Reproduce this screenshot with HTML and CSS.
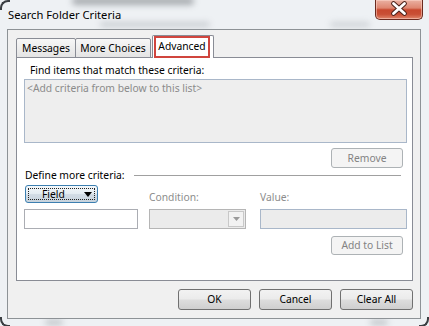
FILE: index.html
```html
<!DOCTYPE html>
<html>
<head>
<meta charset="utf-8">
<link rel="stylesheet" href="styles.css">
</head>
<body>
<div class="window">
  <div class="blur b1"></div>
  <div class="blur b2"></div>
  <div class="blur b3"></div>
  <div class="blur b4"></div>
  <div class="blur b5"></div>
  <div class="corner c-tl"></div>
  <div class="corner c-bl"></div>
  <div class="corner c-br"></div>
  <div class="titlebar">
    <span class="title">Search Folder Criteria</span>
    <div class="close">
      <svg width="48" height="20" viewBox="0 0 48 20">
        <path d="M18.5 4.5 L29.5 14.5 M29.5 4.5 L18.5 14.5" stroke="#4a2018" stroke-width="4.8" stroke-linecap="round" fill="none"/>
        <path d="M18.5 4.5 L29.5 14.5 M29.5 4.5 L18.5 14.5" stroke="#ffffff" stroke-width="2.8" stroke-linecap="round" fill="none"/>
      </svg>
    </div>
  </div>
  <div class="client">
    <div class="tabstrip">
      <div class="tab tab-messages">Messages</div>
      <div class="tab tab-more">More Choices</div>
      <div class="tab selected"><span class="mark">Advanced</span></div>
    </div>
    <div class="panel">
      <div class="find">Find items that match these criteria:</div>
      <div class="listbox">&lt;Add criteria from below to this list&gt;</div>
      <div class="btn disabled remove">Remove</div>
      <div class="sep"><span>Define more criteria:</span><i></i></div>
      <div class="criteria">
        <div class="field-btn"><span class="focus"></span><span class="field-text">Field</span>
          <svg class="field-arrow" width="8" height="5" viewBox="0 0 8 5"><path d="M0 0 H8 L4 5 Z" fill="#000"/></svg>
        </div>
        <div class="dim">Condition:</div>
        <div class="dim">Value:</div>
        <div class="input"></div>
        <div class="combo"><span class="drop"><svg width="7" height="4" viewBox="0 0 7 4"><path d="M0 0 H7 L3.5 4 Z" fill="#9a9a9a"/></svg></span></div>
        <div class="value"></div>
      </div>
      <div class="btn disabled add">Add to List</div>
    </div>
    <div class="footer">
      <div class="btn">OK</div>
      <div class="btn">Cancel</div>
      <div class="btn">Clear All</div>
    </div>
  </div>
</div>
</body>
</html>
```
FILE: styles.css
```css
* { box-sizing: border-box; }
body {
  margin: 0;
  font-family: "Noto Sans", "Open Sans", sans-serif;
  font-size: 10.3px;
  color: #000;
}
.window {
  position: relative;
  width: 429px;
  height: 326px;
  background: #eef1f4;
  overflow: hidden;
}
.blur {
  position: absolute;
  filter: blur(3px);
  border-radius: 4px;
}
.b1 { left: 72px; top: -3px; width: 122px; height: 8px; background: #6e7378; opacity: .55; }
.b2 { left: 100px; top: 22px; width: 110px; height: 5px; background: #9aa0a6; opacity: .45; }
.b3 { left: 330px; top: 22px; width: 40px; height: 5px; background: #9aa0a6; opacity: .4; }
.b4 { left: 45px; top: 320px; width: 18px; height: 5px; background: #8a8f94; opacity: .5; }
.b5 { left: 370px; top: 320px; width: 18px; height: 5px; background: #8a8f94; opacity: .5; }
.corner {
  position: absolute;
  width: 10px;
  height: 10px;
  border: 2px solid #3a3e42;
}
.c-tl { left: 0; top: 0; border-right: none; border-bottom: none; border-radius: 8px 0 0 0; }
.c-bl { left: 0; top: 317px; border-right: none; border-top: none; border-radius: 0 0 0 8px; }
.c-br { left: 419px; top: 317px; border-left: none; border-top: none; border-radius: 0 0 8px 0; }

.titlebar {
  position: relative;
  height: 29px;
  display: flex;
  align-items: flex-start;
}
.title {
  font-size: 11.2px;
  line-height: 14px;
  padding: 8px 0 0 8px;
}
.close {
  margin-left: auto;
  margin-right: 6px;
  width: 48px;
  height: 20px;
  border: 1px solid #6a2a1f;
  border-top: none;
  border-radius: 0 0 5px 5px;
  background: linear-gradient(#eab1a2 0%, #de8670 42%, #c8482e 52%, #c94f35 75%, #e0866b 100%);
  box-shadow: inset 0 0 0 1px rgba(255,220,210,.5);
}
.close svg { display: block; margin: -1px 0 0 -1px; }

.client {
  position: relative;
  margin-left: 7px;
  width: 414px;
  height: 290px;
  background: #f0f0f0;
  border: 1px solid #8d9296;
  padding: 5px 7px 8px 8px;
  display: flex;
  flex-direction: column;
}

.tabstrip {
  display: flex;
  align-items: flex-end;
  height: 23px;
  margin-bottom: -1px;
  position: relative;
  z-index: 1;
}
.tab {
  height: 20px;
  border: 1px solid #898c95;
  border-radius: 2px 2px 0 0;
  background: linear-gradient(#f7f7f7, #e4e4e4);
  display: flex;
  align-items: center;
  justify-content: center;
  padding-bottom: 1px;
}
.tab-messages { width: 60px; }
.tab-more { width: 76px; margin-left: -1px; }
.tab.selected {
  width: 62px;
  height: 23px;
  margin-left: 1px;
  background: #fff;
  border-bottom: none;
  align-items: flex-start;
  justify-content: flex-start;
  padding: 0;
}
.mark {
  width: 56px;
  height: 22px;
  margin-left: 1px;
  border: 2px solid #d0453e;
  display: flex;
  align-items: center;
  justify-content: center;
  padding-bottom: 2px;
}

.panel {
  height: 224px;
  flex: none;
  border: 1px solid #898c95;
  background: #fff;
  padding: 5px 5px 0 7px;
  display: flex;
  flex-direction: column;
}
.find {
  margin-left: 6px;
  height: 15px;
  line-height: 15px;
}
.listbox {
  margin-top: 1px;
  height: 64px;
  border: 1px solid #a9b7c9;
  background: #eeeeee;
  color: #8b8b8b;
  padding: 1px 2px;
  line-height: 14px;
}
.btn {
  width: 73px;
  height: 21px;
  border: 1px solid #707070;
  border-radius: 3px;
  background: linear-gradient(#f2f2f2 0%, #ebebeb 48%, #dddddd 52%, #cfcfcf 100%);
  display: flex;
  align-items: center;
  justify-content: center;
  padding-bottom: 1px;
}
.btn.disabled {
  width: 72px;
  border-color: #adb2b5;
  background: #f4f4f4;
  color: #838383;
}
.remove {
  align-self: flex-end;
  height: 20px;
  margin-top: 5px;
  margin-right: 4px;
}
.sep {
  display: flex;
  align-items: center;
  height: 15px;
  margin-top: -1px;
  margin-left: 1px;
  margin-right: 6px;
}
.sep i {
  flex: 1;
  height: 1px;
  background: #a0a0a0;
  margin-left: 9px;
  margin-top: 1px;
}
.criteria {
  display: grid;
  grid-template-columns: 125px 111px 147px;
  grid-template-rows: 20px 20px;
  row-gap: 4px;
  margin-top: 3px;
}
.field-btn {
  position: relative;
  width: 73px;
  height: 18px;
  margin-left: 1px;
  border: 1px solid #3c7fb1;
  border-radius: 3px;
  background: linear-gradient(#f4f8fb 0%, #e4ecf2 48%, #d3dde6 52%, #c6d2dc 100%);
  display: flex;
  align-items: center;
  padding-left: 16px;
  padding-bottom: 1px;
}
.focus {
  position: absolute;
  inset: 2px;
  border: 1px dotted #222;
}
.field-arrow {
  margin-left: auto;
  margin-right: 5px;
  margin-top: 1px;
}
.dim {
  color: #8d8d8d;
  align-self: end;
  line-height: 15px;
}
.input {
  width: 114px;
  height: 20px;
  border: 1px solid #abadb3;
  background: #fff;
}
.combo {
  width: 97px;
  height: 20px;
  border: 1px solid #b5b5b5;
  background: #ebebeb;
  display: flex;
  justify-content: flex-end;
}
.drop {
  width: 16px;
  margin: 1px;
  border: 1px solid #c8c8c8;
  background: #f2f2f2;
  display: flex;
  align-items: center;
  justify-content: center;
}
.value {
  width: 147px;
  height: 20px;
  border: 1px solid #a9b7c9;
  background: #ececec;
}
.add {
  align-self: flex-end;
  height: 19px;
  margin-top: 7px;
  margin-right: 4px;
}
.footer {
  display: flex;
  justify-content: flex-end;
  gap: 8px;
  margin-top: 8px;
}
```
